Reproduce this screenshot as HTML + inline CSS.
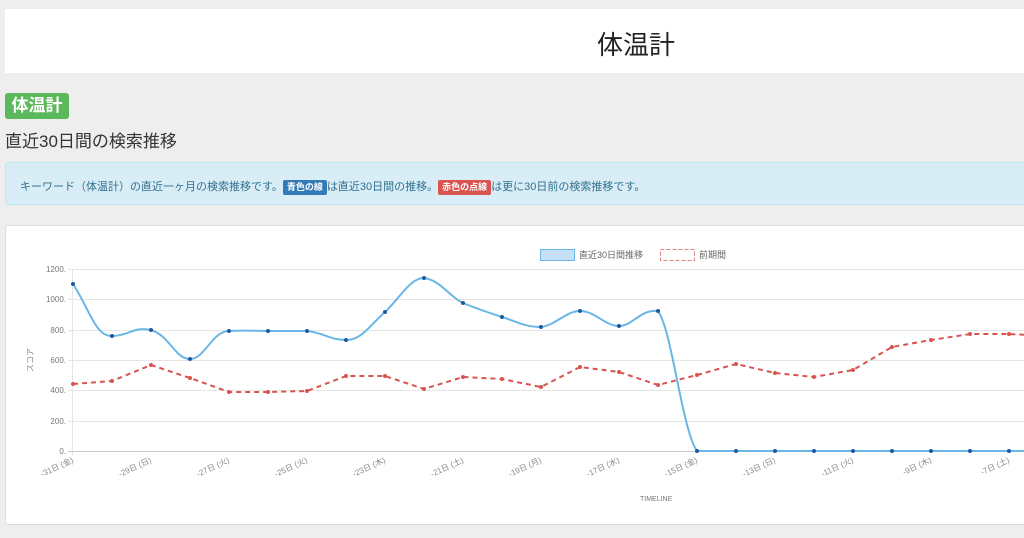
<!DOCTYPE html><html><head><meta charset="utf-8"><style>
body{margin:0;background:#eee;font-family:"Liberation Sans","Noto Sans CJK JP",sans-serif;width:1024px;height:538px;overflow:hidden;position:relative}
.hdr{position:absolute;left:5px;top:9px;width:1040px;height:64px;background:#fff}
.hdr span{position:absolute;left:592px;top:16px;font-size:26px;color:#222}
.badge{position:absolute;left:5px;top:93px;width:64px;height:26px;background:#5cb85c;border-radius:3px;color:#fff;font-weight:bold;font-size:17px;line-height:26px;text-align:center}
h2{position:absolute;left:5px;top:127px;margin:0;font-weight:normal;font-size:17px;color:#333}
.alert{position:absolute;left:5px;top:162px;width:1040px;height:43px;background:#d9edf7;border:1px solid #bce8f1;border-radius:3px;box-sizing:border-box;font-size:11px;color:#31708f;padding:15px 0 0 14px;white-space:nowrap}
.lb{display:inline-block;color:#fff;font-weight:bold;font-size:9px;padding:1px 4px;border-radius:2px;line-height:13px}
.card{position:absolute;left:5px;top:225px;width:1040px;height:298px;background:#fff;border:1px solid #ddd;border-radius:3px}
svg{position:absolute;left:0;top:0}
</style></head><body>
<div class="hdr"><span>体温計</span></div>
<div class="badge">体温計</div>
<h2>直近30日間の検索推移</h2>
<div class="alert">キーワード（体温計）の直近一ヶ月の検索推移です。<span class="lb" style="background:#337ab7">青色の線</span>は直近30日間の推移。<span class="lb" style="background:#d9534f">赤色の点線</span>は更に30日前の検索推移です。</div>
<div class="card"></div>
<svg width="1024" height="538" font-family="Liberation Sans,Noto Sans CJK JP,sans-serif">
<g stroke="#e5e5e5" stroke-width="1">
<line x1="68" y1="269.5" x2="1024" y2="269.5"/><line x1="68" y1="299.5" x2="1024" y2="299.5"/><line x1="68" y1="330.5" x2="1024" y2="330.5"/><line x1="68" y1="360.5" x2="1024" y2="360.5"/><line x1="68" y1="390.5" x2="1024" y2="390.5"/><line x1="68" y1="421.5" x2="1024" y2="421.5"/>
<line x1="72.5" y1="269" x2="72.5" y2="455"/></g>
<line x1="68" y1="451.5" x2="1024" y2="451.5" stroke="#ccc"/>
<g font-size="8" fill="#777" text-anchor="end">
<text x="66" y="272">1200.</text><text x="66" y="302">1000.</text><text x="66" y="333">800.</text><text x="66" y="363">600.</text><text x="66" y="393">400.</text><text x="66" y="424">200.</text><text x="66" y="454">0.</text></g>
<text transform="translate(33,372) rotate(-90)" font-size="8" fill="#888">スコア</text>
<text x="640" y="501" font-size="7" fill="#777">TIMELINE</text>
<g font-size="8" fill="#888" text-anchor="end">
<text transform="translate(74,462) rotate(-25)">-31日 (金)</text>
<text transform="translate(152,462) rotate(-25)">-29日 (日)</text>
<text transform="translate(230,462) rotate(-25)">-27日 (火)</text>
<text transform="translate(308,462) rotate(-25)">-25日 (火)</text>
<text transform="translate(386,462) rotate(-25)">-23日 (木)</text>
<text transform="translate(464,462) rotate(-25)">-21日 (土)</text>
<text transform="translate(542,462) rotate(-25)">-19日 (月)</text>
<text transform="translate(620,462) rotate(-25)">-17日 (水)</text>
<text transform="translate(698,462) rotate(-25)">-15日 (金)</text>
<text transform="translate(776,462) rotate(-25)">-13日 (日)</text>
<text transform="translate(854,462) rotate(-25)">-11日 (火)</text>
<text transform="translate(932,462) rotate(-25)">-9日 (木)</text>
<text transform="translate(1010,462) rotate(-25)">-7日 (土)</text></g>
<rect x="540.5" y="249.5" width="34" height="11" fill="#c6e0f5" stroke="#6ab7e6"/>
<text x="579" y="258" font-size="9" fill="#666">直近30日間推移</text>
<rect x="660.5" y="249.5" width="34" height="11" fill="#fff" stroke="#e08080" stroke-dasharray="4,2"/>
<text x="699" y="258" font-size="9" fill="#666">前期間</text>
<polyline fill="none" stroke="#d9534f" stroke-width="2" stroke-dasharray="5,4" points="73,384 112,381 151,365 190,378 229,392 268,392 307,391 346,376 385,376 424,389 463,377 502,379 541,387 580,367 619,372 658,385 697,375 736,364 775,373 814,377 853,370 892,347 931,340 970,334 1009,334 1048,336"/>
<g fill="#d9534f"><circle cx="73" cy="384" r="2"/><circle cx="112" cy="381" r="2"/><circle cx="151" cy="365" r="2"/><circle cx="190" cy="378" r="2"/><circle cx="229" cy="392" r="2"/><circle cx="268" cy="392" r="2"/><circle cx="307" cy="391" r="2"/><circle cx="346" cy="376" r="2"/><circle cx="385" cy="376" r="2"/><circle cx="424" cy="389" r="2"/><circle cx="463" cy="377" r="2"/><circle cx="502" cy="379" r="2"/><circle cx="541" cy="387" r="2"/><circle cx="580" cy="367" r="2"/><circle cx="619" cy="372" r="2"/><circle cx="658" cy="385" r="2"/><circle cx="697" cy="375" r="2"/><circle cx="736" cy="364" r="2"/><circle cx="775" cy="373" r="2"/><circle cx="814" cy="377" r="2"/><circle cx="853" cy="370" r="2"/><circle cx="892" cy="347" r="2"/><circle cx="931" cy="340" r="2"/><circle cx="970" cy="334" r="2"/><circle cx="1009" cy="334" r="2"/></g>
<path fill="none" stroke="#6ab7e6" stroke-width="2" d="M73,284 C90,310 95,336 112,336 C128,336 135,326 151,330 C170,336 175,359 190,359 C205,359 212,331 229,331 C245,330 255,331 268,331 L307,331 C325,333 330,340 346,340 C362,340 370,325 385,312 C400,298 410,278 424,278 C440,280 450,297 463,303 C480,310 490,313 502,317 C518,322 525,327 541,327 C556,325 566,311 580,311 C595,311 605,326 619,326 C633,326 640,309 658,311 C672,330 682,430 697,451 L1024,451"/>
<g fill="#1f5aa0"><circle cx="73" cy="284" r="2"/><circle cx="112" cy="336" r="2"/><circle cx="151" cy="330" r="2"/><circle cx="190" cy="359" r="2"/><circle cx="229" cy="331" r="2"/><circle cx="268" cy="331" r="2"/><circle cx="307" cy="331" r="2"/><circle cx="346" cy="340" r="2"/><circle cx="385" cy="312" r="2"/><circle cx="424" cy="278" r="2"/><circle cx="463" cy="303" r="2"/><circle cx="502" cy="317" r="2"/><circle cx="541" cy="327" r="2"/><circle cx="580" cy="311" r="2"/><circle cx="619" cy="326" r="2"/><circle cx="658" cy="311" r="2"/><circle cx="697" cy="451" r="2"/><circle cx="736" cy="451" r="2"/><circle cx="775" cy="451" r="2"/><circle cx="814" cy="451" r="2"/><circle cx="853" cy="451" r="2"/><circle cx="892" cy="451" r="2"/><circle cx="931" cy="451" r="2"/><circle cx="970" cy="451" r="2"/><circle cx="1009" cy="451" r="2"/></g>
</svg>
</body></html>
